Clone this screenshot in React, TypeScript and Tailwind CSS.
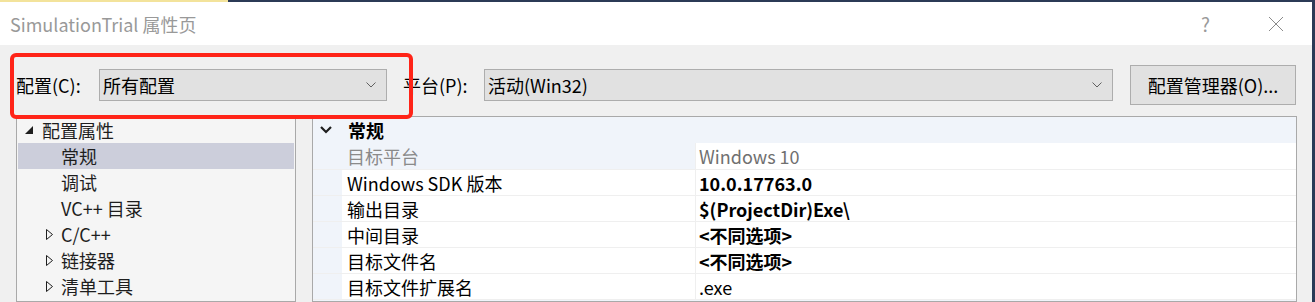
import React from 'react'

const FONT = { fontFamily: '"Noto Sans CJK SC", "Noto Sans", sans-serif' }

function Chevron() {
  return (
    <svg width="10" height="6" viewBox="0 0 10 6" className="shrink-0">
      <polyline points="0.5,0.5 5,5 9.5,0.5" fill="none" stroke="#606060" strokeWidth="1" />
    </svg>
  )
}

function Combo({ text, width }: { text: string; width: string }) {
  return (
    <div className={`${width} h-[32px] flex items-center justify-between bg-[#e1e1e1] border border-[#adadad] pl-[3px] pr-[10px]`}>
      <span className="text-[18px] leading-none text-black">{text}</span>
      <Chevron />
    </div>
  )
}

const TREE = [
  { label: '配置属性', level: 0, open: true },
  { label: '常规', level: 1, selected: true },
  { label: '调试', level: 1 },
  { label: 'VC++ 目录', level: 1 },
  { label: 'C/C++', level: 1, closed: true },
  { label: '链接器', level: 1, closed: true },
  { label: '清单工具', level: 1, closed: true },
]

const ROWS = [
  { name: 'Windows SDK 版本', value: '10.0.17763.0', bold: true },
  { name: '输出目录', value: '$(ProjectDir)Exe\\', bold: true },
  { name: '中间目录', value: '<不同选项>', bold: true },
  { name: '目标文件名', value: '<不同选项>', bold: true },
  { name: '目标文件扩展名', value: '.exe', bold: false },
]

export default function App() {
  return (
    <div className="w-[1315px] h-[302px] overflow-hidden bg-[#2b3a56] flex flex-col relative" style={FONT}>
      {/* taskbar-ish strip */}
      <div className="h-[2px] w-[228px] bg-[#f3e39b] shrink-0" />

      <div className="flex-1 mr-[3px] bg-[#f0f0f0] flex flex-col min-h-0">
        {/* Title bar */}
        <div className="h-[43px] shrink-0 bg-white flex items-center pl-[10px]">
          <span className="text-[18px] text-[#999999] leading-none">SimulationTrial 属性页</span>
          <div className="ml-auto flex items-center">
            <span className="text-[19px] text-[#9a9a9a] leading-none mr-[58px]">?</span>
            <svg width="16" height="16" viewBox="0 0 16 16" className="mr-[28px]">
              <path d="M1 1 L15 15 M15 1 L1 15" stroke="#8a8a8a" strokeWidth="1" fill="none" />
            </svg>
          </div>
        </div>

        {/* Config row */}
        <div className="mt-[20px] h-[40px] shrink-0 flex items-center pl-[16px] text-[18px] text-black">
          <span className="w-[83px] leading-none">配置(C):</span>
          <Combo text="所有配置" width="w-[288px]" />
          <span className="w-[81px] ml-[16px] leading-none">平台(P):</span>
          <Combo text="活动(Win32)" width="w-[629px]" />
          <button className="ml-[17px] w-[166px] h-[40px] bg-[#e1e1e1] border border-[#adadad] text-[18px] leading-none text-black">
            配置管理器(O)...
          </button>
        </div>

        {/* Panels */}
        <div className="mt-[11px] flex-1 flex pl-[16px] min-h-0">
          {/* Tree */}
          <div className="w-[280px] border border-[#a9a9a9] bg-[#f5f5f5] px-[1px] text-[18px] text-[#1e1e1e]">
            {TREE.map((t) => (
              <div
                key={t.label}
                className={`h-[26px] flex items-center relative ${t.selected ? 'bg-[#cccedb]' : ''}`}
              >
                {t.open && (
                  <svg width="8" height="8" viewBox="0 0 8 8" className="absolute left-[7px] top-[9px]">
                    <polygon points="8,0 8,8 0,8" fill="#1e1e1e" />
                  </svg>
                )}
                {t.closed && (
                  <svg width="7" height="11" viewBox="0 0 7 11" className="absolute left-[28px] top-[8px]">
                    <polygon points="0.5,0.5 6.5,5.5 0.5,10.5" fill="none" stroke="#1e1e1e" strokeWidth="1" />
                  </svg>
                )}
                <span className={`leading-none ${t.level === 0 ? 'pl-[24px]' : 'pl-[43px]'}`}>{t.label}</span>
              </div>
            ))}
          </div>

          {/* Property grid */}
          <div className="ml-[16px] w-[985px] border border-[#a9a9a9] bg-[#f0f4fa] text-[18px]">
            <div className="h-[26px] flex items-center">
              <svg width="12" height="8" viewBox="0 0 12 8" className="ml-[7px] mr-[16px]">
                <polyline points="1,1 6,6 11,1" fill="none" stroke="#1e1e1e" strokeWidth="2.2" />
              </svg>
              <span className="font-bold leading-none text-black">常规</span>
            </div>
            <div className="h-[27px] flex border-b border-[#efefef]">
              <div className="w-[382px] pl-[34px] flex items-center text-[#8a8a8a] leading-none">目标平台</div>
              <div className="flex-1 bg-white border-l border-[#efefef] pl-[3px] flex items-center text-[#707070] leading-none">
                Windows 10
              </div>
            </div>
            {ROWS.map((r) => (
              <div key={r.name} className="h-[26px] flex border-b border-[#efefef]">
                <div className="w-[29px] bg-[#f0f4fa]" />
                <div className="w-[353px] bg-white pl-[5px] flex items-center text-black leading-none">{r.name}</div>
                <div
                  className={`flex-1 bg-white border-l border-[#efefef] pl-[3px] flex items-center text-black leading-none ${r.bold ? 'font-bold' : ''}`}
                >
                  {r.value}
                </div>
              </div>
            ))}
          </div>
        </div>
      </div>

      {/* red annotation box */}
      <div className="absolute left-[10px] top-[53px] w-[403px] h-[66px] border-[4px] border-[#ff2418] rounded-[6px]" />
    </div>
  )
}
